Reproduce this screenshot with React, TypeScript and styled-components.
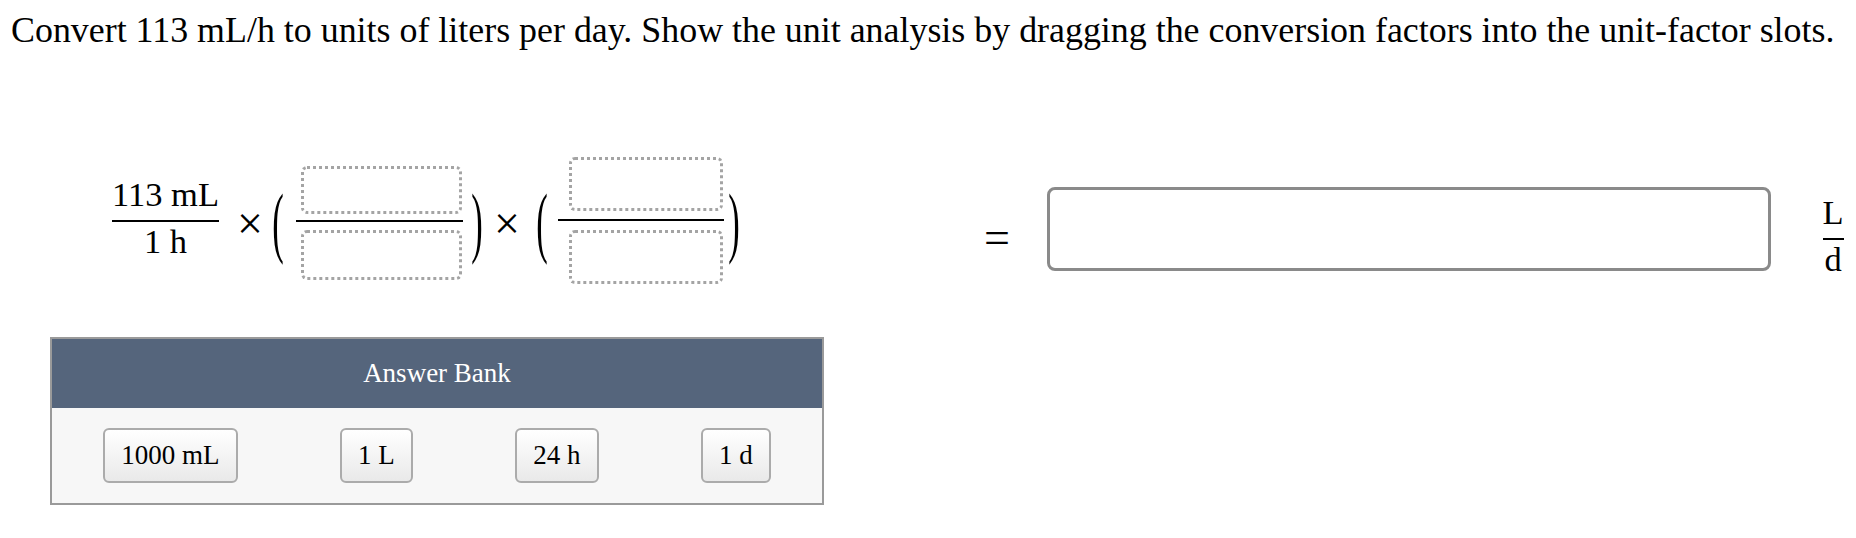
import React from "react";
import styled, { createGlobalStyle } from "styled-components";

const GlobalStyle = createGlobalStyle`
  html, body {
    margin: 0;
    padding: 0;
    background: #ffffff;
  }
  body {
    font-family: "Liberation Serif", "Times New Roman", serif;
    color: #000000;
  }
`;

const Page = styled.div`
  display: flex;
  flex-direction: column;
  align-items: flex-start;
`;

const Prompt = styled.p`
  margin: 0;
  padding: 11px 0 0 11px;
  font-size: 35.9px;
  line-height: 39px;
  white-space: nowrap;
`;

const EquationRow = styled.div`
  display: flex;
  align-items: center;
  margin-top: 107px;
  padding-left: 107px;
  font-size: 34.5px;
`;

/* stacked numerator / bar / denominator */
const Frac = styled.span<{ $pad: number; $ml?: number; $mt?: number }>`
  display: inline-flex;
  flex-direction: column;
  align-items: stretch;
  text-align: center;
  margin-left: ${(p) => p.$ml ?? 0}px;
  margin-top: ${(p) => p.$mt ?? 0}px;
  padding: 0 ${(p) => p.$pad}px;
`;

const Num = styled.span`
  line-height: 34px;
  padding-bottom: 9px;
  white-space: nowrap;
`;

const Den = styled.span`
  line-height: 34px;
  padding-top: 2.4px;
  padding-bottom: 6.6px;
  white-space: nowrap;
`;

const Bar = styled.span`
  display: block;
  height: 2px;
  background: #000000;
`;

const Op = styled.span<{ $ml: number; $mt: number; $w: number }>`
  display: inline-flex;
  justify-content: center;
  width: ${(p) => p.$w}px;
  margin-left: ${(p) => p.$ml}px;
  margin-top: ${(p) => p.$mt}px;
  font-size: 46px;
  line-height: 46px;
`;

const Paren = styled.span<{ $ml: number }>`
  display: inline-flex;
  justify-content: center;
  width: 12px;
  margin-left: ${(p) => p.$ml}px;
  font-size: 34.5px;
  line-height: 34px;
  transform: scaleY(2.25);
`;

const SlotColumn = styled.span<{ $ml: number; $w: number; $pt: number }>`
  display: inline-flex;
  flex-direction: column;
  align-items: flex-end;
  width: ${(p) => p.$w}px;
  margin-left: ${(p) => p.$ml}px;
  padding-top: ${(p) => p.$pt}px;
`;

const Slot = styled.span<{ $w: number; $h: number; $mt?: number; $mb?: number }>`
  display: block;
  box-sizing: border-box;
  width: ${(p) => p.$w}px;
  height: ${(p) => p.$h}px;
  margin-top: ${(p) => p.$mt ?? 0}px;
  margin-bottom: ${(p) => p.$mb ?? 0}px;
  margin-right: 1px;
  border: 3px dotted #a4a4a4;
  border-radius: 6px;
`;

const SlotBar = styled.span`
  display: block;
  align-self: stretch;
  height: 2px;
  background: #000000;
`;

const AnswerBox = styled.div`
  box-sizing: border-box;
  width: 724px;
  height: 84px;
  margin-left: 35px;
  margin-top: 16px;
  border: 3px solid #8a8a8a;
  border-radius: 8px;
  background: #ffffff;
`;

const Bank = styled.section`
  box-sizing: border-box;
  width: 774px;
  margin: 53px 0 0 50px;
  border: 2px solid #9a9a9a;
  background: #f7f7f7;
`;

const BankHeader = styled.div`
  height: 69px;
  display: flex;
  align-items: center;
  justify-content: center;
  background: #55657c;
  color: #ffffff;
  font-size: 27px;
`;

const BankBody = styled.div`
  height: 95px;
  display: flex;
  align-items: center;
  justify-content: space-around;
`;

const Tile = styled.div`
  box-sizing: border-box;
  height: 55px;
  padding: 0 16px;
  display: flex;
  align-items: center;
  border: 2px solid #ababab;
  border-radius: 6px;
  background: linear-gradient(#ffffff, #e9e9e9);
  font-size: 27px;
  white-space: nowrap;
`;

type FactorProps = {
  ml: number;
  width: number;
  slotW: number;
  topH: number;
  botH: number;
  gapTop: number;
  gapBot: number;
  padTop: number;
};

const Factor: React.FC<FactorProps> = ({ ml, width, slotW, topH, botH, gapTop, gapBot, padTop }) => (
  <SlotColumn $ml={ml} $w={width} $pt={padTop}>
    <Slot $w={slotW} $h={topH} $mb={gapTop} />
    <SlotBar />
    <Slot $w={slotW} $h={botH} $mt={gapBot} />
  </SlotColumn>
);

const tiles = ["1000 mL", "1 L", "24 h", "1 d"];

export default function App() {
  return (
    <Page>
      <GlobalStyle />
      <Prompt>
        Convert 113 mL/h to units of liters per day. Show the unit analysis by dragging the
        conversion factors into the unit-factor slots.
      </Prompt>

      <EquationRow>
        <Frac $pad={5}>
          <Num>113 mL</Num>
          <Bar />
          <Den>1 h</Den>
        </Frac>
        <Op $w={26} $ml={13} $mt={6}>×</Op>
        <Paren $ml={9}>(</Paren>
        <Factor ml={12} width={167} slotW={161} topH={48} botH={50} gapTop={6} gapBot={8} padTop={4} />
        <Paren $ml={8}>)</Paren>
        <Op $w={26} $ml={11} $mt={6}>×</Op>
        <Paren $ml={16}>(</Paren>
        <Factor ml={10} width={166} slotW={154} topH={54} botH={54} gapTop={8} gapBot={9} padTop={0} />
        <Paren $ml={4}>)</Paren>
        <Op $w={30} $ml={242} $mt={35}>=</Op>
        <AnswerBox />
        <Frac $pad={2.5} $ml={49} $mt={37}>
          <Num>L</Num>
          <Bar />
          <Den>d</Den>
        </Frac>
      </EquationRow>

      <Bank>
        <BankHeader>Answer Bank</BankHeader>
        <BankBody>
          {tiles.map((t) => (
            <Tile key={t}>{t}</Tile>
          ))}
        </BankBody>
      </Bank>
    </Page>
  );
}
